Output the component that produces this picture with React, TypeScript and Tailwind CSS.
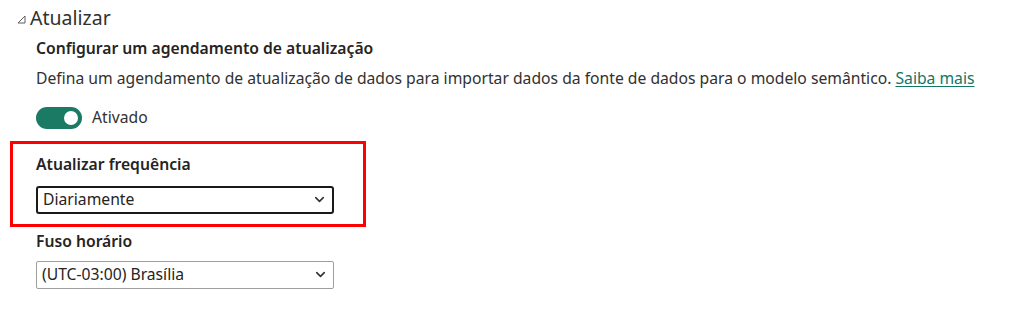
import { ChevronDown } from "lucide-react";

function Select({ value, active }: { value: string; active?: boolean }) {
  return (
    <div
      className={`flex h-[28px] w-[298px] items-center justify-between pl-[5px] pr-[5px] ${
        active
          ? "rounded-[3px] border-2 border-[#1b1a19]"
          : "rounded-[2px] border border-[#a19f9d]"
      }`}
    >
      <span className="text-[15.7px] text-[#252423]">{value}</span>
      <ChevronDown size={15} strokeWidth={2.5} className="text-[#323130]" />
    </div>
  );
}

export default function App() {
  return (
    <div
      className="h-[310px] w-[1024px] bg-white text-[#252423]"
      style={{ fontFamily: '"Noto Sans", "Open Sans", sans-serif' }}
    >
      <div className="flex items-center gap-[4px] pl-[17px] pt-[5px]">
        <svg width="9" height="9" viewBox="0 0 9 9" className="mt-[3px]">
          <path d="M8 1 L8 8 L1 8 Z" fill="none" stroke="#605e5c" strokeWidth="1" />
        </svg>
        <span className="text-[19.5px] leading-[26px] text-[#323130]">Atualizar</span>
      </div>

      <div className="pl-[36px]">
        <div className="mt-[6px] text-[15.7px] font-semibold leading-[22px]">
          Configurar um agendamento de atualização
        </div>
        <div className="mt-[8px] text-[15.7px] leading-[22px] text-[#323130]">
          Defina um agendamento de atualização de dados para importar dados da fonte de dados para o modelo semântico.{" "}
          <span className="text-[#117865] underline underline-offset-2">Saiba mais</span>
        </div>
        <div className="mt-[17px] flex items-center gap-[10px]">
          <div className="flex h-[22px] w-[46px] items-center justify-end rounded-full bg-[#1a7a64] pr-[4px]">
            <div className="h-[14px] w-[14px] rounded-full bg-white" />
          </div>
          <span className="text-[15.7px] text-[#323130]">Ativado</span>
        </div>
      </div>

      <div className="ml-[10px] mt-[11px] w-[356px] border-[3px] border-[#ff0000] pb-[10px] pl-[23px] pt-[9px]">
        <div className="text-[15.7px] font-semibold leading-[22px]">Atualizar frequência</div>
        <div className="mt-[11px]">
          <Select value="Diariamente" active />
        </div>
      </div>

      <div className="pl-[36px]">
        <div className="mt-[3px] text-[15.7px] font-semibold leading-[22px]">Fuso horário</div>
        <div className="mt-[9px]">
          <Select value="(UTC-03:00) Brasília" />
        </div>
      </div>
    </div>
  );
}
